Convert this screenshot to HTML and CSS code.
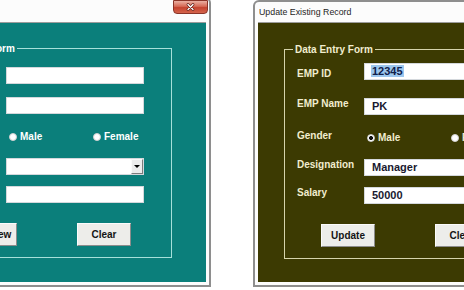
FILE: index.html
```html
<!DOCTYPE html>
<html>
<head>
<meta charset="utf-8">
<link rel="stylesheet" href="styles.css">
</head>
<body>
<div class="desk">
  <div class="win win-teal">
    <div class="titlebar">
      <span class="title">Data Entry Form</span>
      <span class="close"><svg width="11" height="8" viewBox="0 0 11 8"><path d="M3 1.5 L8 6.5 M8 1.5 L3 6.5" stroke="#5a1a12" stroke-width="2.6" stroke-linecap="round"/><path d="M3 1.5 L8 6.5 M8 1.5 L3 6.5" stroke="#ffffff" stroke-width="1.4" stroke-linecap="round"/></svg></span>
    </div>
    <div class="client">
      <fieldset class="frame">
        <legend>Data Entry Form</legend>
        <div class="rows">
          <div class="row r1"><span class="lbl l1">EMP ID</span><div class="box"></div></div>
          <div class="row r2"><span class="lbl l2">EMP Name</span><div class="box"></div></div>
          <div class="row r3"><span class="lbl l3">Gender</span>
            <div class="opts">
              <span class="opt"><span class="dot"></span>Male</span>
              <span class="opt"><span class="dot"></span>Female</span>
            </div>
          </div>
          <div class="row r4"><span class="lbl l4">Designation</span><div class="box combo"><span class="val"></span><span class="dd"><span class="tri"></span></span></div></div>
          <div class="row r5"><span class="lbl l5">Salary</span><div class="box"></div></div>
        </div>
        <div class="btns"><button class="btn">Add New</button><button class="btn">Clear</button></div>
      </fieldset>
    </div>
  </div>

  <div class="win win-olive">
    <div class="titlebar">
      <span class="title">Update Existing Record</span>
    </div>
    <div class="client">
      <fieldset class="frame">
        <legend>Data Entry Form</legend>
        <div class="rows">
          <div class="row r1"><span class="lbl l1">EMP ID</span><div class="box"><span class="sel">12345</span></div></div>
          <div class="row r2"><span class="lbl l2">EMP Name</span><div class="box">PK</div></div>
          <div class="row r3"><span class="lbl l3">Gender</span>
            <div class="opts">
              <span class="opt"><span class="dot on"></span>Male</span>
              <span class="opt"><span class="dot"></span>Female</span>
            </div>
          </div>
          <div class="row r4"><span class="lbl l4">Designation</span><div class="box combo"><span class="val">Manager</span><span class="dd"><span class="tri"></span></span></div></div>
          <div class="row r5"><span class="lbl l5">Salary</span><div class="box">50000</div></div>
        </div>
        <div class="btns"><button class="btn">Update</button><button class="btn">Clear</button></div>
      </fieldset>
    </div>
  </div>
</div>
</body>
</html>
```

FILE: styles.css
```css
* { box-sizing: border-box; }
html, body { margin: 0; padding: 0; }
body {
  width: 464px;
  height: 290px;
  overflow: hidden;
  background: #ffffff;
  font-family: "Liberation Sans", Arial, sans-serif;
}
.desk {
  position: relative;
  width: 464px;
  height: 290px;
  overflow: hidden;
  background: #ffffff;
}

/* window chrome */
.win {
  position: absolute;
  top: 0;
  border: 2px solid #8e8e8e;
  border-radius: 6px 6px 0 0;
  background: #fcfcfc;
  padding: 0 3px 3px 3px;
}
.win-teal { left: -105px; top: -3px; }
.win-olive { left: 253px; }

.titlebar {
  height: 20px;
  display: flex;
  align-items: center;
  padding-left: 1px;
}
.win-teal .titlebar { height: 23px; align-items: flex-start; }
.win-teal .title { visibility: hidden; }
.title {
  font-size: 8.8px;
  color: #1e1e1e;
  line-height: 12px;
}
.close {
  margin-left: auto;
  margin-right: -2px;
  margin-top: 1px;
  width: 35px;
  height: 14px;
  border: 1px solid #8a3428;
  border-radius: 0 0 4px 4px;
  background: linear-gradient(#eab0a2 0%, #d66a56 45%, #c4432f 55%, #d4644c 100%);
  display: flex;
  align-items: center;
  justify-content: center;
}
.close svg { display: block; }

.client {
  width: 306px;
  height: 260px;
  border-top: 1px solid #9c9c9c;
  padding: 20px 0 0 26px;
}
.win-teal .client { background: #0b7f7b; padding-top: 19px; }
.win-olive .client { background: #3c3a02; }

/* frame */
.frame {
  margin: 0;
  width: 246px;
  min-width: 0;
  padding: 7px 0 11px 0;
  border: 1px solid #a6e0da;
}
.win-olive .frame { border-color: #d6d4ac; }
.frame legend {
  margin-left: 8px;
  padding: 0 2px;
  font-size: 10px;
  font-weight: bold;
  line-height: 13px;
  color: #ffffff;
}
.win-olive .frame legend { color: #f1edcf; }

.rows { padding-left: 12px; }
.row {
  display: flex;
  align-items: flex-start;
  height: 17px;
}
.r2 { margin-top: 18px; }
.r3 { margin-top: 14px; }
.r4 { margin-top: 13px; }
.r5 { margin-top: 11px; }
.win-teal .r1 { margin-top: 5px; }
.win-teal .r2 { margin-top: 13px; }

.lbl {
  width: 67px;
  flex: none;
  font-size: 10px;
  font-weight: bold;
  line-height: 17px;
  color: #f1edcf;
  white-space: nowrap;
}
.l1 { margin-top: 2px; }
.l2 { margin-top: -3px; }
.l3 { margin-top: -2px; }
.l4 { margin-top: -3px; }
.l5 { margin-top: -3px; }

.box {
  width: 138px;
  height: 17px;
  flex: none;
  background: #ffffff;
  border: 1px solid #d4d8dc;
  padding-left: 7px;
  font-size: 11px;
  font-weight: bold;
  line-height: 15px;
  color: #1a1a30;
  white-space: nowrap;
}
.sel {
  background: #9cc7ee;
  color: #10204a;
  margin-left: -1px;
  padding: 0 1px;
}
.combo {
  display: flex;
  align-items: stretch;
  padding-right: 0;
}
.combo .val { flex: 1; }
.dd {
  width: 12px;
  margin: 0 0 0 0;
  background: #ececec;
  border: 1px solid;
  border-color: #fafafa #7c7c7c #7c7c7c #fafafa;
  display: flex;
  align-items: center;
  justify-content: center;
}
.tri {
  width: 0;
  height: 0;
  border-left: 3px solid transparent;
  border-right: 3px solid transparent;
  border-top: 3px solid #000;
}

.opts {
  display: flex;
  align-items: center;
  height: 17px;
  width: 138px;
  padding-left: 3px;
}
.opt {
  width: 84px;
  flex: none;
  display: flex;
  align-items: center;
  gap: 3px;
  font-size: 10px;
  font-weight: bold;
  color: #ffffff;
  white-space: nowrap;
}
.win-olive .opt { color: #f1edcf; }
.dot {
  width: 8px;
  height: 8px;
  border-radius: 50%;
  background: #ffffff;
  border: 1px solid #d0d0d0;
  flex: none;
}
.dot.on {
  background: radial-gradient(circle, #111 0 1.6px, #ffffff 2.3px);
}

.btns {
  display: flex;
  gap: 60px;
  padding-left: 36px;
  margin-top: 20px;
}
.btn {
  width: 54px;
  height: 23px;
  padding: 0;
  margin: 0;
  background: #ededea;
  border: 1px solid;
  border-color: #fbfbfb #8c8c8c #8c8c8c #fbfbfb;
  font-family: "Liberation Sans", Arial, sans-serif;
  font-size: 10px;
  font-weight: bold;
  color: #141414;
  white-space: nowrap;
}
```
